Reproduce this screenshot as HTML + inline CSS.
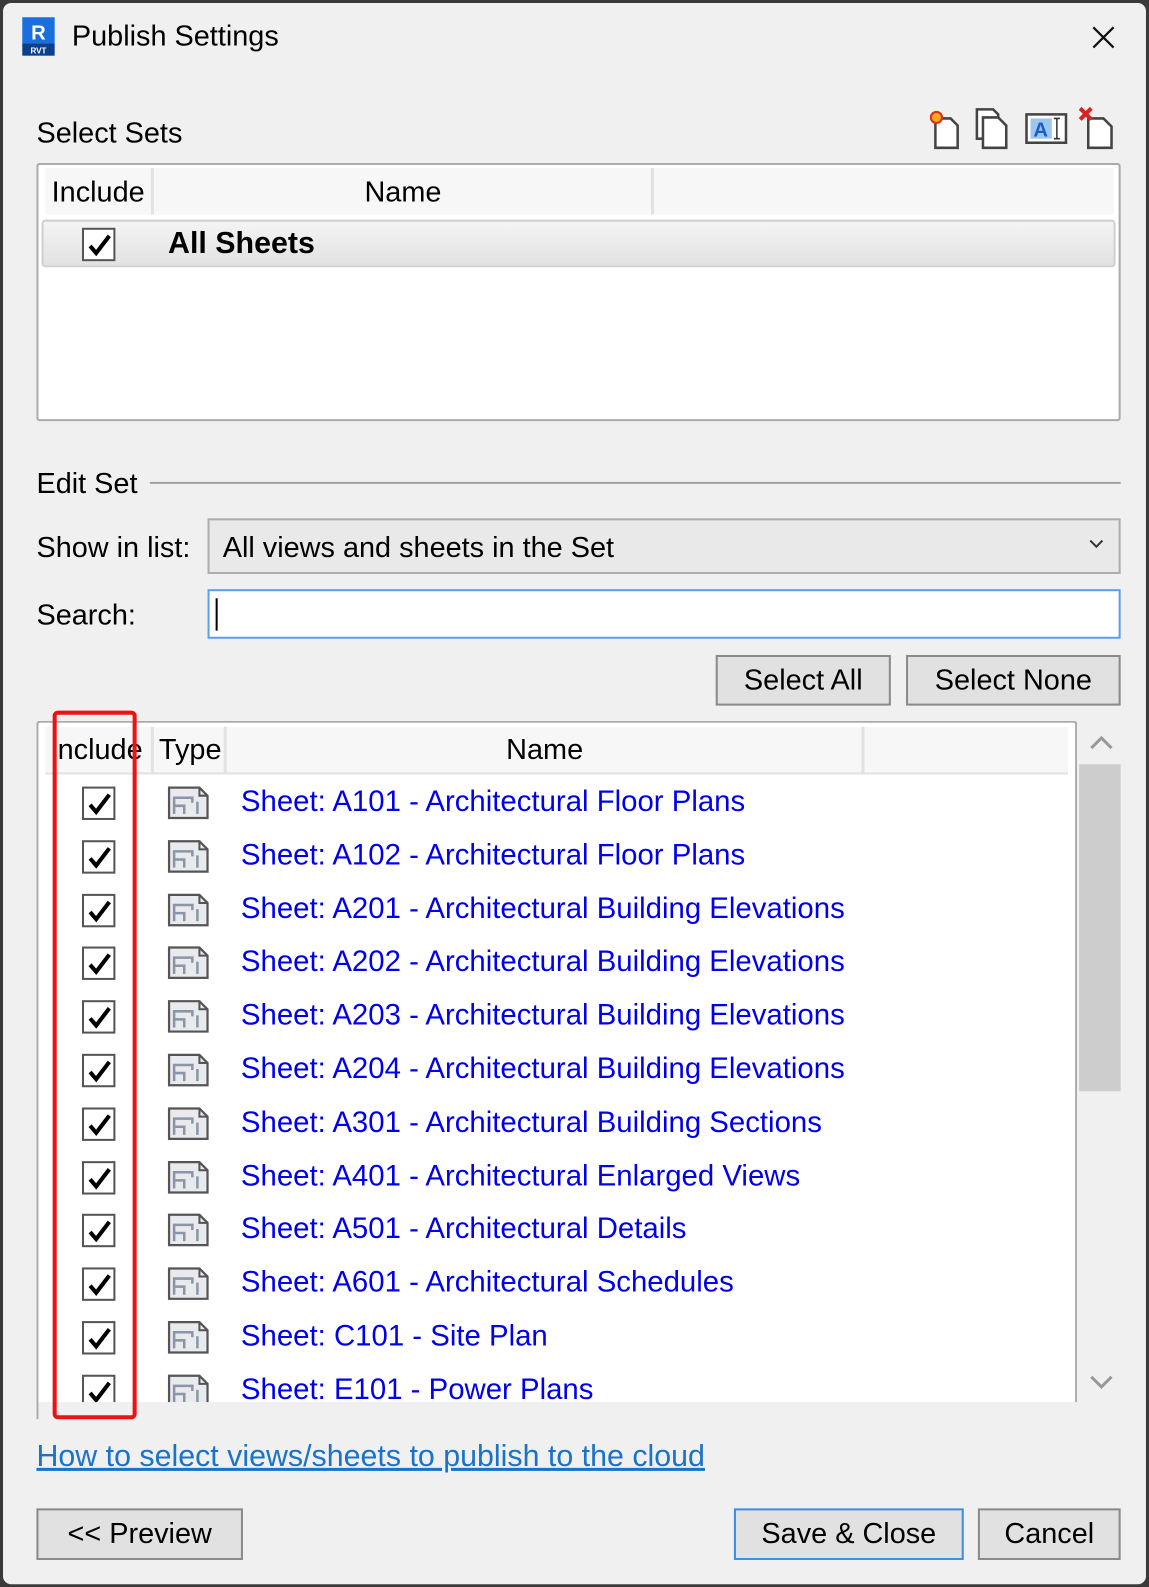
<!DOCTYPE html>
<html><head><meta charset="utf-8"><style>
*{box-sizing:border-box;margin:0;padding:0}
body{width:1149px;height:1587px;background:#3a3a3a;position:relative;overflow:hidden;font-family:"Liberation Sans",sans-serif;font-size:28.5px;color:#000}
#w{position:absolute;left:0;top:0;width:1135px;height:1568px;transform:scale(1.01233);transform-origin:0 0}
.dlg{position:absolute;left:3px;top:3px;width:1129px;height:1562px;background:#f0f0f0;border-radius:8px}
.a{position:absolute;white-space:nowrap}
.cb{position:absolute;width:33px;height:33px;border:2px solid #555;background:#fff}
.cb svg{position:absolute;left:3px;top:3px}
.btn{position:absolute;border:2px solid #8a8a8a;background:#e1e1e1;text-align:center}
.lnk{color:#0000ee;font-size:29px}
</style></head><body><div id="w">
<div class="dlg"></div>
<svg class="a" style="left:20px;top:15px" width="38" height="42" viewBox="0 0 38 42"><path d="M2 2h32v26H2z" fill="#1a6fdc"/><rect x="2" y="28" width="32" height="12" fill="#0c3f8c"/><text x="18" y="24" font-family="Liberation Sans" font-weight="bold" font-size="20" fill="#fff" text-anchor="middle">R</text><text x="18" y="38" font-family="Liberation Sans" font-weight="bold" font-size="8" fill="#fff" text-anchor="middle">RVT</text></svg>
<div class="a" style="left:71px;top:20px">Publish Settings</div>
<svg class="a" style="left:1078px;top:25px" width="24" height="24"><path d="M2 2L22 22M22 2L2 22" stroke="#111" stroke-width="2.2"/></svg>
<div class="a" style="left:36px;top:116px">Select Sets</div>
<svg class="a" style="left:915px;top:104px" width="190" height="46" viewBox="0 0 190 46">
<path d="M9 13h15l7 7v22H9z" fill="#fff" stroke="#444" stroke-width="2.5"/><circle cx="10" cy="12" r="5.5" fill="#f5a623" stroke="#e03010" stroke-width="2"/>
<g fill="#fff" stroke="#444" stroke-width="2.5"><path d="M50 4h16l5 5v24H50z"/><path d="M56 12h15l8 8v22H56z"/></g>
<rect x="99" y="9" width="39" height="28" fill="#fff" stroke="#444" stroke-width="2.5"/><rect x="103" y="13" width="21" height="20" fill="#9cc6ee"/><text x="113" y="31" font-family="Liberation Sans" font-weight="bold" font-size="20" fill="#1a5fc0" text-anchor="middle">A</text><path d="M129 13v20M126 13h6M126 33h6" stroke="#333" stroke-width="1.5"/>
<path d="M160 13h15l8 8v21h-23z" fill="#fff" stroke="#444" stroke-width="2.5"/><path d="M152 3l11 11M163 3l-11 11" stroke="#e02020" stroke-width="4"/>
</svg>
<div class="a" style="left:36px;top:161px;width:1071px;height:255px;border:2px solid #ababab;background:#fff;border-radius:3px"></div>
<div class="a" style="left:45px;top:166px;width:1055px;height:46px;background:#f7f7f7"></div>
<div class="a" style="left:149px;top:166px;width:3px;height:46px;background:#e2e2e2"></div>
<div class="a" style="left:643px;top:166px;width:3px;height:46px;background:#e2e2e2"></div>
<div class="a" style="left:51px;top:174px">Include</div>
<div class="a" style="left:360px;top:174px">Name</div>
<div class="a" style="left:41px;top:217px;width:1061px;height:47px;border:2px solid #cfcfcf;border-radius:4px;background:linear-gradient(#f4f4f4,#e2e2e2)"></div>
<div class="cb" style="left:81px;top:225px"><svg width="25" height="25"><path d="M3 13l6 7L22 3" stroke="#000" stroke-width="4" fill="none"/></svg></div>
<div class="a" style="left:166px;top:224px;font-weight:bold;font-size:30px">All Sheets</div>
<div class="a" style="left:36px;top:462px">Edit Set</div>
<div class="a" style="left:148px;top:476px;width:959px;height:2px;background:#a0a0a0"></div>
<div class="a" style="left:36px;top:525px">Show in list:</div>
<div class="a" style="left:205px;top:512px;width:902px;height:55px;border:2px solid #adadad;background:#e9e9e9"></div>
<div class="a" style="left:220px;top:525px">All views and sheets in the Set</div>
<svg class="a" style="left:1075px;top:532px" width="16" height="12"><path d="M2 2l6 6 6-6" stroke="#333" stroke-width="2" fill="none"/></svg>
<div class="a" style="left:36px;top:592px">Search:</div>
<div class="a" style="left:205px;top:582px;width:902px;height:49px;border:2px solid #5c9ee8;background:#fff"></div>
<div class="a" style="left:213px;top:591px;width:2px;height:32px;background:#000"></div>
<div class="btn" style="left:707px;top:647px;width:173px;height:50px;line-height:46px">Select All</div>
<div class="btn" style="left:895px;top:647px;width:212px;height:50px;line-height:46px">Select None</div>
<div class="a" style="left:36px;top:712px;width:1028px;height:690px;border:2px solid #ababab;border-bottom:none;background:#fff;border-radius:3px 3px 0 0"></div>
<div class="a" style="left:45px;top:718px;width:1010px;height:47px;background:#f7f7f7;border-bottom:2px solid #e2e2e2"></div>
<div class="a" style="left:149px;top:718px;width:3px;height:47px;background:#e2e2e2"></div>
<div class="a" style="left:221px;top:718px;width:3px;height:47px;background:#e2e2e2"></div>
<div class="a" style="left:851px;top:718px;width:3px;height:47px;background:#e2e2e2"></div>
<div class="a" style="left:57px;top:725px;width:92px;overflow:hidden"><span style="margin-left:-8px">Include</span></div>
<div class="a" style="left:157px;top:725px">Type</div>
<div class="a" style="left:500px;top:725px">Name</div>
<svg class="a" style="left:1076px;top:726px" width="24" height="16"><path d="M2 13l10-10 10 10" stroke="#999" stroke-width="3" fill="none"/></svg>
<div class="a" style="left:1066px;top:755px;width:41px;height:323px;background:#cdcdcd"></div>
<svg class="a" style="left:1076px;top:1357px" width="24" height="16"><path d="M2 3l10 10 10-10" stroke="#999" stroke-width="3" fill="none"/></svg>
<div id="rows"></div>
<div class="a" style="left:38px;top:1385px;width:1026px;height:20px;background:#f0f0f0"></div>
<div class="a" style="left:36px;top:1422px;color:#1a73c8;text-decoration:underline;font-size:30px">How to select views/sheets to publish to the cloud</div>
<div class="btn" style="left:36px;top:1490px;width:204px;height:51px;line-height:47px">&lt;&lt; Preview</div>
<div class="btn" style="left:725px;top:1490px;width:227px;height:51px;line-height:47px;border-color:#3d8ee6">Save &amp; Close</div>
<div class="btn" style="left:966px;top:1490px;width:141px;height:51px;line-height:47px">Cancel</div>
<div class="a" style="left:52px;top:702px;width:83px;height:700px;border:4px solid #ee1111;border-radius:5px"></div>
</div>
<script>
var names=["A101 - Architectural Floor Plans","A102 - Architectural Floor Plans","A201 - Architectural Building Elevations","A202 - Architectural Building Elevations","A203 - Architectural Building Elevations","A204 - Architectural Building Elevations","A301 - Architectural Building Sections","A401 - Architectural Enlarged Views","A501 - Architectural Details","A601 - Architectural Schedules","C101 - Site Plan","E101 - Power Plans"];
var h="";
for(var i=0;i<names.length;i++){var c=793+i*52.8;
h+='<div class="cb" style="left:81px;top:'+(c-16)+'px"><svg width="25" height="25"><path d="M3 13l6 7L22 3" stroke="#000" stroke-width="4" fill="none"/></svg></div>';
h+='<svg class="a" style="left:165px;top:'+(c-17)+'px" width="42" height="34"><path d="M2 2h30l8 8v22H2z" fill="#e8eaee" stroke="#555" stroke-width="2.2"/><path d="M32 2v8h8" fill="none" stroke="#555" stroke-width="2"/><path d="M7 28V12h18v5M7 20h10v8M30 16v12" fill="none" stroke="#8a96a8" stroke-width="2.5"/></svg>';
h+='<div class="a lnk" style="left:238px;top:'+(c-17)+'px">Sheet: '+names[i]+'</div>';}
document.getElementById("w").insertAdjacentHTML("beforeend","");
document.getElementById("rows").innerHTML=h;
</script>
</body></html>
